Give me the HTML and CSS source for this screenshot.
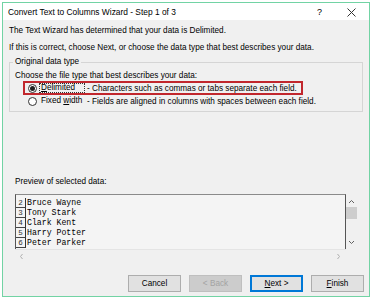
FILE: index.html
```html
<!DOCTYPE html>
<html>
<head>
<meta charset="utf-8">
<link rel="stylesheet" href="styles.css">
</head>
<body>
<div class="window">
  <div class="titlebar">
    <span class="title">Convert Text to Columns Wizard - Step 1 of 3</span>
    <span class="tb-btns">
      <span class="help">?</span>
      <svg class="close" width="9" height="9" viewBox="0 0 9 9"><path d="M0.5 0.5 L8.5 8.5 M8.5 0.5 L0.5 8.5" stroke="#333" stroke-width="1" fill="none"/></svg>
    </span>
  </div>
  <div class="body">
    <p class="line l1">The Text Wizard has determined that your data is Delimited.</p>
    <p class="line l2">If this is correct, choose Next, or choose the data type that best describes your data.</p>
    <fieldset class="group">
      <legend>Original data type</legend>
      <div class="choose">Choose the file type that best describes your data:</div>
      <div class="opt sel">
        <span class="radio on"></span>
        <span class="lbl focus"><u>D</u>elimited</span>
        <span class="desc">- Characters such as commas or tabs separate each field.</span>
      </div>
      <div class="opt">
        <span class="radio"></span>
        <span class="lbl">Fixed <u>w</u>idth</span>
        <span class="desc">- Fields are aligned in columns with spaces between each field.</span>
      </div>
    </fieldset>
    <div class="prev-label">Preview of selected data:</div>
    <div class="preview">
      <div class="pv-main">
        <div class="grid">
          <div class="row"><span class="num">2</span><span class="cell">Bruce Wayne</span></div>
          <div class="row"><span class="num">3</span><span class="cell">Tony Stark</span></div>
          <div class="row"><span class="num">4</span><span class="cell">Clark Kent</span></div>
          <div class="row"><span class="num">5</span><span class="cell">Harry Potter</span></div>
          <div class="row"><span class="num">6</span><span class="cell">Peter Parker</span></div>
        </div>
        <div class="vscroll">
          <svg width="7" height="5" viewBox="0 0 7 5"><path d="M1 4 L3.5 1.5 L6 4" stroke="#606060" stroke-width="1" fill="none"/></svg>
          <div class="thumb"></div>
          <div class="spacer"></div>
          <svg width="7" height="5" viewBox="0 0 7 5"><path d="M1 1 L3.5 3.5 L6 1" stroke="#606060" stroke-width="1" fill="none"/></svg>
        </div>
      </div>
      <div class="hscroll">
        <svg width="5" height="7" viewBox="0 0 5 7"><path d="M3.5 1 L1.5 3.5 L3.5 6" stroke="#b0b0b0" stroke-width="1" fill="none"/></svg>
        <svg width="5" height="7" viewBox="0 0 5 7"><path d="M1.5 1 L3.5 3.5 L1.5 6" stroke="#b0b0b0" stroke-width="1" fill="none"/></svg>
      </div>
    </div>
    <div class="buttons">
      <button class="btn">Cancel</button>
      <button class="btn disabled">&lt; <u>B</u>ack</button>
      <button class="btn default"><u>N</u>ext &gt;</button>
      <button class="btn"><u>F</u>inish</button>
    </div>
  </div>
</div>
</body>
</html>
```

FILE: styles.css
```css
* { box-sizing: border-box; }
html, body { margin: 0; padding: 0; background: #ffffff; }
body {
  font-family: "Liberation Sans", Arial, sans-serif;
  font-size: 8.2px;
  color: #000;
}
.window {
  margin: 2px 2px 0 2px;
  width: 368px;
  border: 1px solid #72d3a4;
  background: #f0f0f0;
}
.titlebar {
  height: 17px;
  background: #ffffff;
  display: flex;
  align-items: center;
  justify-content: space-between;
  padding-left: 5px;
}
.title { font-size: 8.4px; line-height: 12px; margin-top: 1px; }
.tb-btns { display: flex; align-items: center; }
.help { font-size: 9px; margin-right: 25px; margin-top: 1px; }
.close { margin-right: 13px; margin-top: 1px; }
.body {
  padding: 5px 0 4px 0;
}
.line { margin: 0 0 0 6px; line-height: 12px; height: 12px; white-space: nowrap; }
.l2 { margin-top: 5px; }
.group {
  margin: 2px 6px 0 6px;
  padding: 0 0 3px 0;
  border: 1px solid #d5d5d5;
  min-width: 0;
}
.group legend {
  padding: 0 2px;
  margin-left: 3px;
  line-height: 12px;
  height: 12px;
}
.choose { line-height: 12px; height: 12px; margin: 2px 0 0 5px; white-space: nowrap; }
.opt {
  display: flex;
  align-items: center;
  height: 14px;
  width: 280px;
  margin: -1px 0 0 13px;
  border: 2px solid transparent;
  white-space: nowrap;
}
.opt.sel { border-color: #c1272d; }
.radio {
  width: 9px; height: 9px;
  border: 1px solid #333;
  border-radius: 50%;
  background: #fff;
  margin-left: 3px;
  display: flex;
  align-items: center;
  justify-content: center;
  flex: none;
}
.radio.on::after {
  content: "";
  width: 5px; height: 5px;
  border-radius: 50%;
  background: #222;
}
.lbl {
  width: 46px;
  margin-left: 2px;
  padding: 0 1px;
  line-height: 8px;
  border: 1px dotted transparent;
  flex: none;
}
.lbl.focus { border-color: #333; }
.desc { margin-left: 2px; }
.prev-label { margin: 64px 0 0 12px; line-height: 12px; height: 12px; }
.preview {
  margin: 6px 0 0 12px;
  width: 342px;
}
.pv-main { display: flex; height: 55px; }
.grid {
  width: 331px;
  border-top: 1px solid #8a8a8a;
  border-left: 1px solid #555;
  border-right: 1px solid #555;
  background: #f4f4f4;
  padding-top: 3px;
  font-family: "Liberation Mono", "Courier New", monospace;
  font-size: 8.2px;
  color: #000;
}
.row { display: flex; height: 10px; line-height: 10px; }
.num {
  width: 10px;
  border-right: 1px solid #333;
  border-bottom: 1px solid #444;
  text-align: center;
  font-size: 7.5px;
  color: #333;
}
.cell { padding-left: 1px; }
.vscroll {
  width: 11px;
  display: flex;
  flex-direction: column;
  align-items: center;
  padding: 5px 0 4px 0;
}
.thumb { width: 11px; height: 12px; background: #cdcdcd; margin-top: 3px; }
.spacer { flex: 1; }
.hscroll {
  width: 331px;
  height: 13px;
  display: flex;
  align-items: center;
  justify-content: space-between;
  padding: 0 5px 0 4px;
  border-top: 1px solid #e4e4e4;
}
.buttons {
  display: flex;
  justify-content: flex-end;
  gap: 8px;
  margin: 13px 5px 0 0;
}
.btn {
  width: 53px;
  height: 17px;
  padding: 0;
  font-family: "Liberation Sans", Arial, sans-serif;
  font-size: 8.2px;
  color: #000;
  background: #e1e1e1;
  border: 1px solid #adadad;
}
.btn.disabled { color: #a3a3a3; background: #cccccc; border-color: #bfbfbf; }
.btn.disabled u { text-decoration: none; }
.btn.default { border: 1px solid #0078d7; box-shadow: inset 0 0 0 1px #0078d7; }
```
